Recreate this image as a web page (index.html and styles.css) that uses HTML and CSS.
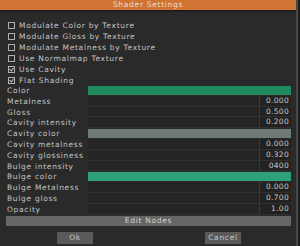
FILE: index.html
```html
<!DOCTYPE html>
<html>
<head>
<meta charset="utf-8">
<link rel="stylesheet" href="styles.css">
</head>
<body>
<div class="window">
  <div class="titlebar">Shader Settings</div>
  <div class="content">
    <div class="checks">
      <div class="check"><span class="box"></span>Modulate Color by Texture</div>
      <div class="check"><span class="box"></span>Modulate Gloss by Texture</div>
      <div class="check"><span class="box"></span>Modulate Metalness by Texture</div>
      <div class="check"><span class="box"></span>Use Normalmap Texture</div>
      <div class="check"><span class="box on"></span>Use Cavity</div>
      <div class="check"><span class="box on"></span>Flat Shading</div>
    </div>
    <div class="props">
      <div class="prop"><span class="label">Color</span><span class="swatch green"></span></div>
      <div class="prop"><span class="label">Metalness</span><span class="field"><span class="val">0.000</span></span></div>
      <div class="prop"><span class="label">Gloss</span><span class="field"><span class="val">0.500</span></span></div>
      <div class="prop"><span class="label">Cavity intensity</span><span class="field"><span class="val">0.200</span></span></div>
      <div class="prop"><span class="label">Cavity color</span><span class="swatch gray"></span></div>
      <div class="prop"><span class="label">Cavity metalness</span><span class="field"><span class="val">0.000</span></span></div>
      <div class="prop"><span class="label">Cavity glossiness</span><span class="field"><span class="val">0.320</span></span></div>
      <div class="prop"><span class="label">Bulge intensity</span><span class="field"><span class="val">0400</span></span></div>
      <div class="prop"><span class="label">Bulge color</span><span class="swatch teal"></span></div>
      <div class="prop"><span class="label">Bulge Metalness</span><span class="field"><span class="val">0.000</span></span></div>
      <div class="prop"><span class="label">Bulge gloss</span><span class="field"><span class="val">0.700</span></span></div>
      <div class="prop"><span class="label">Opacity</span><span class="field"><span class="val">1.00</span></span></div>
    </div>
    <div class="editnodes">Edit Nodes</div>
    <div class="buttons">
      <span class="btn">Ok</span>
      <span class="btn">Cancel</span>
    </div>
  </div>
</div>
</body>
</html>
```
FILE: styles.css
```css
html, body {
  margin: 0;
  padding: 0;
  background: #1f1f1f;
}
body {
  width: 300px;
  height: 246px;
  overflow: hidden;
  font-family: "DejaVu Sans", sans-serif;
  font-size: 7.5px;
  color: #c4c4c4;
  letter-spacing: 0.7px;
}
.window {
  width: 296px;
  height: 246px;
  background: #2a2a2a;
  border-right: 2px solid #4a4a4a;
  display: flex;
  flex-direction: column;
}
.titlebar {
  height: 10px;
  line-height: 10px;
  background: #cf7432;
  color: #eadfd2;
  text-align: center;
  font-size: 7.5px;
  border-bottom: 2px solid #1e1e1e;
}
.content {
  display: flex;
  flex-direction: column;
  padding: 8px 5px 0 6px;
}
.checks {
  display: flex;
  flex-direction: column;
}
.check {
  height: 11px;
  line-height: 11px;
  display: flex;
  align-items: center;
  padding-left: 2px;
}
.box {
  width: 5px;
  height: 5px;
  border: 1px solid #b0b0b0;
  margin-right: 4px;
  position: relative;
}
.box.on::after {
  content: "";
  position: absolute;
  left: 1px;
  top: 0px;
  width: 2px;
  height: 3px;
  border: solid #c4c4c4;
  border-width: 0 1px 1px 0;
  transform: rotate(40deg);
}
.props {
  display: flex;
  flex-direction: column;
  margin-top: -1px;
}
.prop {
  height: 10.8px;
  display: flex;
  align-items: stretch;
}
.label {
  width: 81px;
  padding-left: 1px;
  line-height: 11px;
}
.field {
  flex: 1;
  display: flex;
  justify-content: flex-end;
  background: #252525;
  border-bottom: 1px solid #303030;
}
.val {
  width: 29px;
  text-align: right;
  padding-right: 2px;
  border-left: 1px solid #3a3a3a;
  line-height: 10px;
  color: #c8c8c8;
  background: #222;
  letter-spacing: 0.3px;
}
.swatch {
  flex: 1;
  margin: 1px 0;
}
.green { background: #1f8a5e; }
.gray { background: #6e7c75; }
.teal { background: #2ea07a; }
.editnodes {
  margin-top: 1px;
  height: 10px;
  line-height: 10px;
  background: #666;
  color: #d0d0d0;
  text-align: center;
}
.buttons {
  display: flex;
  justify-content: space-between;
  padding: 6px 50px 0 51px;
}
.btn {
  width: 36px;
  height: 12px;
  line-height: 12px;
  text-align: center;
  background: #5a5a5a;
  color: #c8c8c8;
}
```
